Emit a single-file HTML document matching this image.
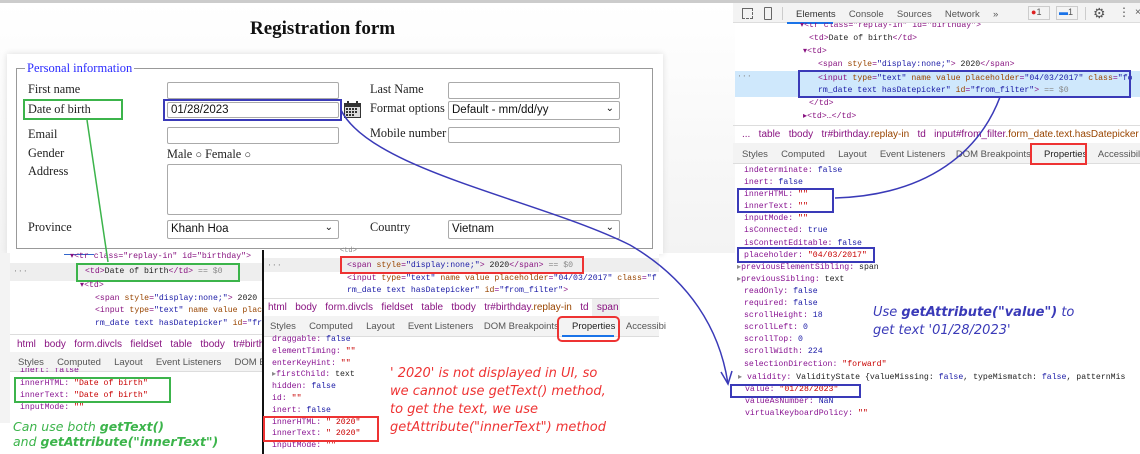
<!DOCTYPE html>
<html><head><meta charset="utf-8">
<style>
*{margin:0;padding:0;box-sizing:border-box}
body{width:1140px;height:454px;position:relative;overflow:hidden;background:#fff;font-family:"Liberation Sans",sans-serif}
.a{position:absolute;white-space:nowrap}
.s{font-family:"Liberation Serif",serif;font-size:12.3px;color:#222}
.m{font-family:"Liberation Mono",monospace;font-size:8.2px;line-height:12px;color:#881391}
.tg{color:#881280}.an{color:#994500}.av{color:#1a1aa6}.str{color:#c80000}.bl{color:#1a1aa6}.gr{color:#888}.tx{color:#222}
.inp{position:absolute;border:1px solid #aaa;background:#fff;border-radius:2px;font-size:12px;color:#111;padding:2px 3px}
.tab{font-size:9.5px;color:#555}
.bc{font-size:10px;color:#881280}
.hand{font-family:"DejaVu Sans",sans-serif;font-style:italic;font-size:12.5px}
</style></head><body>
<div class="a" style="left:0;top:0;width:1140px;height:3px;background:#ccc"></div>
<div class="a" style="left:0;top:3px;width:735px;height:250px;background:linear-gradient(#fff,#f3f3f3)"></div>
<div class="a" style="left:250px;top:18px;font-family:'Liberation Serif',serif;font-weight:bold;font-size:19px;color:#111">Registration form</div>
<div class="a" style="left:7px;top:54px;width:656px;height:200px;background:#fff;box-shadow:0 0 6px #ddd"></div>
<div class="a" style="left:16px;top:68px;width:637px;height:181px;border:1px solid #999"></div>
<div class="a" style="left:25px;top:61px;background:#fff;padding:0 2px;font-family:'Liberation Serif',serif;font-size:12.5px;color:#2b2bff">Personal information</div>
<div class="a s" style="left:28px;top:82px">First name</div>
<div class="inp" style="left:167px;top:82px;width:172px;height:17px"></div>
<div class="a s" style="left:370px;top:82px">Last Name</div>
<div class="inp" style="left:448px;top:82px;width:172px;height:17px"></div>
<div class="a s" style="left:28px;top:102px">Date of birth</div>
<div class="a" style="left:23px;top:99px;width:100px;height:21px;border:2px solid #3cb44b"></div>
<div class="inp" style="left:167px;top:102px;width:172px;height:16px;font-size:11.5px;padding:1px 3px">01/28/2023</div>
<div class="a" style="left:163px;top:99px;width:179px;height:22px;border:2px solid #3a3ab8"></div>
<svg class="a" style="left:343px;top:100px" width="19" height="19" viewBox="0 0 19 19"><rect x="1" y="3" width="17" height="15" fill="#333"/><rect x="2" y="7" width="15" height="10" fill="#ddd"/><g fill="#333"><rect x="3" y="8" width="2" height="2"/><rect x="6" y="8" width="2" height="2"/><rect x="9" y="8" width="2" height="2"/><rect x="12" y="8" width="2" height="2"/><rect x="3" y="11" width="2" height="2"/><rect x="6" y="11" width="2" height="2"/><rect x="9" y="11" width="2" height="2"/><rect x="12" y="11" width="2" height="2"/><rect x="3" y="14" width="2" height="2"/><rect x="6" y="14" width="2" height="2"/><rect x="9" y="14" width="2" height="2"/></g><rect x="4" y="1" width="2" height="4" fill="#333"/><rect x="13" y="1" width="2" height="4" fill="#333"/></svg>
<div class="a s" style="left:370px;top:101px">Format options</div>
<div class="inp" style="left:448px;top:101px;width:172px;height:19px;font-size:11.5px">Default - mm/dd/yy<span style="position:absolute;right:5px;top:1px;font-size:10px">&#8964;</span></div>
<div class="a s" style="left:28px;top:127px">Email</div>
<div class="inp" style="left:167px;top:127px;width:172px;height:17px"></div>
<div class="a s" style="left:370px;top:126px">Mobile number</div>
<div class="inp" style="left:448px;top:127px;width:172px;height:16px"></div>
<div class="a s" style="left:28px;top:146px">Gender</div>
<div class="a s" style="left:167px;top:147px">Male <span style="font-size:11px">○</span> Female <span style="font-size:11px">○</span></div>
<div class="a s" style="left:28px;top:164px">Address</div>
<div class="inp" style="left:167px;top:164px;width:455px;height:51px"></div>
<div class="a s" style="left:28px;top:220px">Province</div>
<div class="inp" style="left:167px;top:220px;width:172px;height:19px;font-size:11.5px">Khanh Hoa<span style="position:absolute;right:5px;top:1px;font-size:10px">&#8964;</span></div>
<div class="a s" style="left:370px;top:220px">Country</div>
<div class="inp" style="left:448px;top:220px;width:172px;height:19px;font-size:11.5px">Vietnam<span style="position:absolute;right:5px;top:1px;font-size:10px">&#8964;</span></div>

<!-- left devtools -->
<div class="a" style="left:10px;top:253px;width:253px;height:167px;background:#fff"></div>
<div class="a" style="left:0;top:253px;width:10px;height:170px;background:#f3f3f3"></div>
<div class="a" style="left:64px;top:254px;width:30px;height:1px;background:#36c"></div>
<div class="a m" style="left:70px;top:251px"><span class="tg">▾&lt;tr class="replay-in" id="birthday"&gt;</span></div>
<div class="a" style="left:10px;top:263px;width:253px;height:18px;background:#eee"></div>
<div class="a m gr" style="left:13px;top:266px">···</div>
<div class="a m" style="left:85px;top:266px"><span class="tg">&lt;td&gt;</span><span class="tx">Date of birth</span><span class="tg">&lt;/td&gt;</span> <span class="gr">== $0</span></div>
<div class="a" style="left:76px;top:263px;width:164px;height:19px;border:2px solid #3cb44b"></div>
<div class="a m" style="left:80px;top:280px"><span class="tg">▾&lt;td&gt;</span></div>
<div class="a m" style="left:95px;top:293px"><span class="tg">&lt;span </span><span class="an">style</span><span class="tg">=</span><span class="av">"display:none;"</span><span class="tg">&gt;</span> <span class="tx">2020</span></div>
<div class="a m" style="left:95px;top:305px"><span class="tg">&lt;input </span><span class="an">type</span><span class="tg">=</span><span class="av">"text"</span> <span class="an">name value plac</span></div>
<div class="a m" style="left:95px;top:318px"><span class="av">rm_date text hasDatepicker"</span> <span class="an">id</span>=<span class="av">"fr</span></div>
<div class="a" style="left:10px;top:334px;width:253px;height:1px;background:#ddd"></div>
<div class="a bc" style="left:17px;top:339px">html&nbsp;&nbsp;&nbsp;body&nbsp;&nbsp;&nbsp;form.divcls&nbsp;&nbsp;&nbsp;fieldset&nbsp;&nbsp;&nbsp;table&nbsp;&nbsp;&nbsp;tbody&nbsp;&nbsp;&nbsp;tr#birth</div>
<div class="a" style="left:10px;top:352px;width:253px;height:20px;background:#f3f3f3;border-bottom:1px solid #ddd"></div>
<div class="a tab" style="left:18px;top:357px">Styles&nbsp;&nbsp;&nbsp;&nbsp;&nbsp;Computed&nbsp;&nbsp;&nbsp;&nbsp;&nbsp;Layout&nbsp;&nbsp;&nbsp;&nbsp;&nbsp;Event Listeners&nbsp;&nbsp;&nbsp;&nbsp;&nbsp;DOM Br</div>
<div class="a m" style="left:20px;top:368px;height:6px;overflow:hidden;line-height:6px">inert: false</div>
<div class="a m" style="left:20px;top:378px">innerHTML: <span class="str">"Date of birth"</span></div>
<div class="a m" style="left:20px;top:390px">innerText: <span class="str">"Date of birth"</span></div>
<div class="a m" style="left:20px;top:402px">inputMode: <span class="str">""</span></div>
<div class="a" style="left:14px;top:377px;width:157px;height:26px;border:2px solid #3cb44b"></div>
<div class="a hand" style="left:13px;top:419px;color:#3cb44b">Can use both <b>getText()</b></div>
<div class="a hand" style="left:13px;top:434px;color:#3cb44b">and <b>getAttribute("innerText")</b></div>

<!-- middle devtools -->
<div class="a" style="left:263px;top:250px;width:396px;height:204px;background:#fff"></div>
<div class="a" style="left:262px;top:250px;width:2px;height:204px;background:#111"></div>
<div class="a m gr" style="left:340px;top:245px;font-size:7px">&lt;td&gt;</div>
<div class="a" style="left:264px;top:258px;width:395px;height:14px;background:#eee"></div>
<div class="a m gr" style="left:267px;top:260px">···</div>
<div class="a m" style="left:347px;top:260px"><span class="tg">&lt;span </span><span class="an">style</span><span class="tg">=</span><span class="av">"display:none;"</span><span class="tg">&gt;</span><span class="tx"> 2020</span><span class="tg">&lt;/span&gt;</span> <span class="gr">== $0</span></div>
<div class="a" style="left:340px;top:256px;width:244px;height:18px;border:2px solid #e33"></div>
<div class="a m" style="left:347px;top:273px"><span class="tg">&lt;input </span><span class="an">type</span><span class="tg">=</span><span class="av">"text"</span> <span class="an">name value placeholder</span>=<span class="av">"04/03/2017"</span> <span class="an">class</span>=<span class="av">"f</span></div>
<div class="a m" style="left:347px;top:285px"><span class="av">rm_date text hasDatepicker"</span> <span class="an">id</span>=<span class="av">"from_filter"</span><span class="tg">&gt;</span></div>
<div class="a" style="left:264px;top:298px;width:395px;height:1px;background:#ddd"></div>
<div class="a" style="left:592px;top:299px;width:28px;height:17px;background:#eee"></div>
<div class="a bc" style="left:268px;top:302px">html&nbsp;&nbsp;&nbsp;body&nbsp;&nbsp;&nbsp;form.divcls&nbsp;&nbsp;&nbsp;fieldset&nbsp;&nbsp;&nbsp;table&nbsp;&nbsp;&nbsp;tbody&nbsp;&nbsp;&nbsp;tr#birthday<span class="an">.replay-in</span>&nbsp;&nbsp;&nbsp;td&nbsp;&nbsp;&nbsp;span</div>
<div class="a" style="left:264px;top:316px;width:395px;height:21px;background:#f3f3f3;border-bottom:1px solid #ddd"></div>
<div class="a tab" style="left:270px;top:321px">Styles&nbsp;&nbsp;&nbsp;&nbsp;&nbsp;Computed&nbsp;&nbsp;&nbsp;&nbsp;&nbsp;Layout&nbsp;&nbsp;&nbsp;&nbsp;&nbsp;Event Listeners&nbsp;&nbsp;&nbsp;&nbsp;DOM Breakpoints&nbsp;&nbsp;&nbsp;&nbsp;&nbsp;<span style="color:#222">Properties</span>&nbsp;&nbsp;&nbsp;&nbsp;Accessibi</div>
<div class="a" style="left:562px;top:335px;width:52px;height:2px;background:#1a73e8"></div>
<div class="a" style="left:557px;top:316px;width:63px;height:26px;border:2px solid #e33;border-radius:5px"></div>
<div class="a m" style="left:272px;top:334px;line-height:11.8px">draggable: <span class="bl">false</span><br>elementTiming: <span class="str">""</span><br>enterKeyHint: <span class="str">""</span><br><span class="gr">▸</span>firstChild: <span class="tx">text</span><br>hidden: <span class="bl">false</span><br>id: <span class="str">""</span><br>inert: <span class="bl">false</span><br>innerHTML: <span class="str">" 2020"</span><br>innerText: <span class="str">" 2020"</span><br>inputMode: <span class="str">""</span></div>
<div class="a" style="left:263px;top:416px;width:116px;height:26px;border:2px solid #e33"></div>
<div class="a hand" style="left:390px;top:365px;color:#e33;line-height:18px;font-size:13px">' 2020' is not displayed in UI, so<br>we cannot use getText() method,<br>to get the text, we use<br>getAttribute("innerText") method</div>

<!-- right devtools -->
<div class="a" style="left:733px;top:3px;width:407px;height:20px;background:#f3f3f3;border-bottom:1px solid #ddd"></div>
<div class="a" style="left:742px;top:8px;width:11px;height:11px;border:1px solid #666;border-right-style:dashed;border-bottom-style:dashed"></div>
<div class="a" style="left:764px;top:7px;width:8px;height:13px;border:1px solid #666;border-radius:1px"></div>
<div class="a" style="left:782px;top:7px;width:1px;height:13px;background:#ccc"></div>
<div class="a tab" style="left:796px;top:9px;font-size:9.5px;color:#333">Elements&nbsp;&nbsp;&nbsp;&nbsp;&nbsp;<span style="color:#555">Console&nbsp;&nbsp;&nbsp;&nbsp;&nbsp;Sources&nbsp;&nbsp;&nbsp;&nbsp;&nbsp;Network&nbsp;&nbsp;&nbsp;&nbsp;&nbsp;»</span></div>
<div class="a" style="left:787px;top:22px;width:46px;height:2px;background:#1a73e8"></div>
<div class="a" style="left:1028px;top:6px;width:22px;height:14px;border:1px solid #ccc;font-size:9px;color:#555;padding-left:2px"><span style="color:#d22">●</span>1</div>
<div class="a" style="left:1056px;top:6px;width:22px;height:14px;border:1px solid #ccc;font-size:9px;color:#555;padding-left:2px"><span style="color:#1a73e8">▬</span>1</div>
<div class="a" style="left:1085px;top:7px;width:1px;height:13px;background:#ccc"></div>
<div class="a" style="left:1093px;top:5px;font-size:14px;color:#555">⚙</div>
<div class="a" style="left:1118px;top:5px;font-size:12px;color:#555">⋮</div>
<div class="a" style="left:1135px;top:7px;font-size:10px;color:#555">×</div>
<div class="a m" style="left:800px;top:23px;height:7px;overflow:hidden;line-height:6px"><span class="tg">▾&lt;tr class="replay-in" id="birthday"&gt;</span></div>
<div class="a m" style="left:809px;top:33px"><span class="tg">&lt;td&gt;</span><span class="tx">Date of birth</span><span class="tg">&lt;/td&gt;</span></div>
<div class="a m" style="left:803px;top:46px"><span class="tg">▾&lt;td&gt;</span></div>
<div class="a m" style="left:818px;top:59px"><span class="tg">&lt;span </span><span class="an">style</span><span class="tg">=</span><span class="av">"display:none;"</span><span class="tg">&gt;</span><span class="tx"> 2020</span><span class="tg">&lt;/span&gt;</span></div>
<div class="a" style="left:735px;top:71px;width:405px;height:26px;background:#cfe8fc"></div>
<div class="a m gr" style="left:737px;top:71px">···</div>
<div class="a m" style="left:818px;top:73px"><span class="tg">&lt;input </span><span class="an">type</span><span class="tg">=</span><span class="av">"text"</span> <span class="an">name value placeholder</span>=<span class="av">"04/03/2017"</span> <span class="an">class</span>=<span class="av">"fo</span></div>
<div class="a m" style="left:818px;top:85px"><span class="av">rm_date text hasDatepicker"</span> <span class="an">id</span>=<span class="av">"from_filter"</span><span class="tg">&gt;</span> <span class="gr">== $0</span></div>
<div class="a" style="left:798px;top:70px;width:333px;height:28px;border:2px solid #3a3ab8"></div>
<div class="a m" style="left:809px;top:98px"><span class="tg">&lt;/td&gt;</span></div>
<div class="a m" style="left:803px;top:111px"><span class="tg">▸&lt;td&gt;…&lt;/td&gt;</span></div>
<div class="a" style="left:733px;top:125px;width:407px;height:1px;background:#ddd"></div>
<div class="a bc" style="left:742px;top:129px">...&nbsp;&nbsp;&nbsp;table&nbsp;&nbsp;&nbsp;tbody&nbsp;&nbsp;&nbsp;tr#birthday<span class="an">.replay-in</span>&nbsp;&nbsp;&nbsp;td&nbsp;&nbsp;&nbsp;input#from_filter<span class="an">.form_date.text.hasDatepicker</span></div>
<div class="a" style="left:733px;top:143px;width:407px;height:21px;background:#f3f3f3;border-bottom:1px solid #ddd"></div>
<div class="a tab" style="left:742px;top:149px">Styles&nbsp;&nbsp;&nbsp;&nbsp;&nbsp;Computed&nbsp;&nbsp;&nbsp;&nbsp;&nbsp;Layout&nbsp;&nbsp;&nbsp;&nbsp;&nbsp;Event Listeners&nbsp;&nbsp;&nbsp;&nbsp;DOM Breakpoints&nbsp;&nbsp;&nbsp;&nbsp;&nbsp;<span style="color:#222">Properties</span>&nbsp;&nbsp;&nbsp;&nbsp;Accessibility</div>
<div class="a" style="left:1030px;top:143px;width:57px;height:22px;border:2px solid #e33"></div>
<div class="a m" style="left:744px;top:165px;line-height:12.1px">indeterminate: <span class="bl">false</span><br>inert: <span class="bl">false</span><br>innerHTML: <span class="str">""</span><br>innerText: <span class="str">""</span><br>inputMode: <span class="str">""</span><br>isConnected: <span class="bl">true</span><br>isContentEditable: <span class="bl">false</span><br>placeholder: <span class="str">"04/03/2017"</span><br><span class="gr" style="margin-left:-7px">▸</span>previousElementSibling: <span class="tx">span</span><br><span class="gr" style="margin-left:-7px">▸</span>previousSibling: <span class="tx">text</span><br>readOnly: <span class="bl">false</span><br>required: <span class="bl">false</span><br>scrollHeight: <span class="bl">18</span><br>scrollLeft: <span class="bl">0</span><br>scrollTop: <span class="bl">0</span><br>scrollWidth: <span class="bl">224</span><br>selectionDirection: <span class="str">"forward"</span></div>
<div class="a m" style="left:738px;top:372px"><span class="gr">▸</span> validity: <span class="tx">ValidityState {valueMissing: <span class="bl">false</span>, typeMismatch: <span class="bl">false</span>, patternMis</span></div>
<div class="a m" style="left:745px;top:384px">value: <span class="str">"01/28/2023"</span></div>
<div class="a m" style="left:745px;top:396px">valueAsNumber: <span class="bl">NaN</span></div>
<div class="a m" style="left:745px;top:408px">virtualKeyboardPolicy: <span class="str">""</span></div>
<div class="a" style="left:737px;top:188px;width:97px;height:25px;border:2px solid #3a3ab8"></div>
<div class="a" style="left:737px;top:247px;width:138px;height:16px;border:2px solid #3a3ab8"></div>
<div class="a" style="left:730px;top:384px;width:131px;height:14px;border:2px solid #3a3ab8"></div>
<div class="a hand" style="left:873px;top:304px;color:#3a3ab8;line-height:18px;font-size:13px">Use <b>getAttribute("value")</b> to<br>get text '01/28/2023'</div>

<svg class="a" style="left:0;top:0" width="1140" height="454" viewBox="0 0 1140 454" fill="none">
<path d="M87,120 L108,262" stroke="#3cb44b" stroke-width="1.5"/>
<path d="M341,110 C370,170 540,200 630,245 C690,280 720,330 728,384" stroke="#3a3ab8" stroke-width="1.5"/>
<path d="M721,372 L728,384 L732,371" stroke="#3a3ab8" stroke-width="1.5"/>
<path d="M1000,97 C980,150 930,195 835,198" stroke="#3a3ab8" stroke-width="1.5"/>
</svg>
</body></html>
